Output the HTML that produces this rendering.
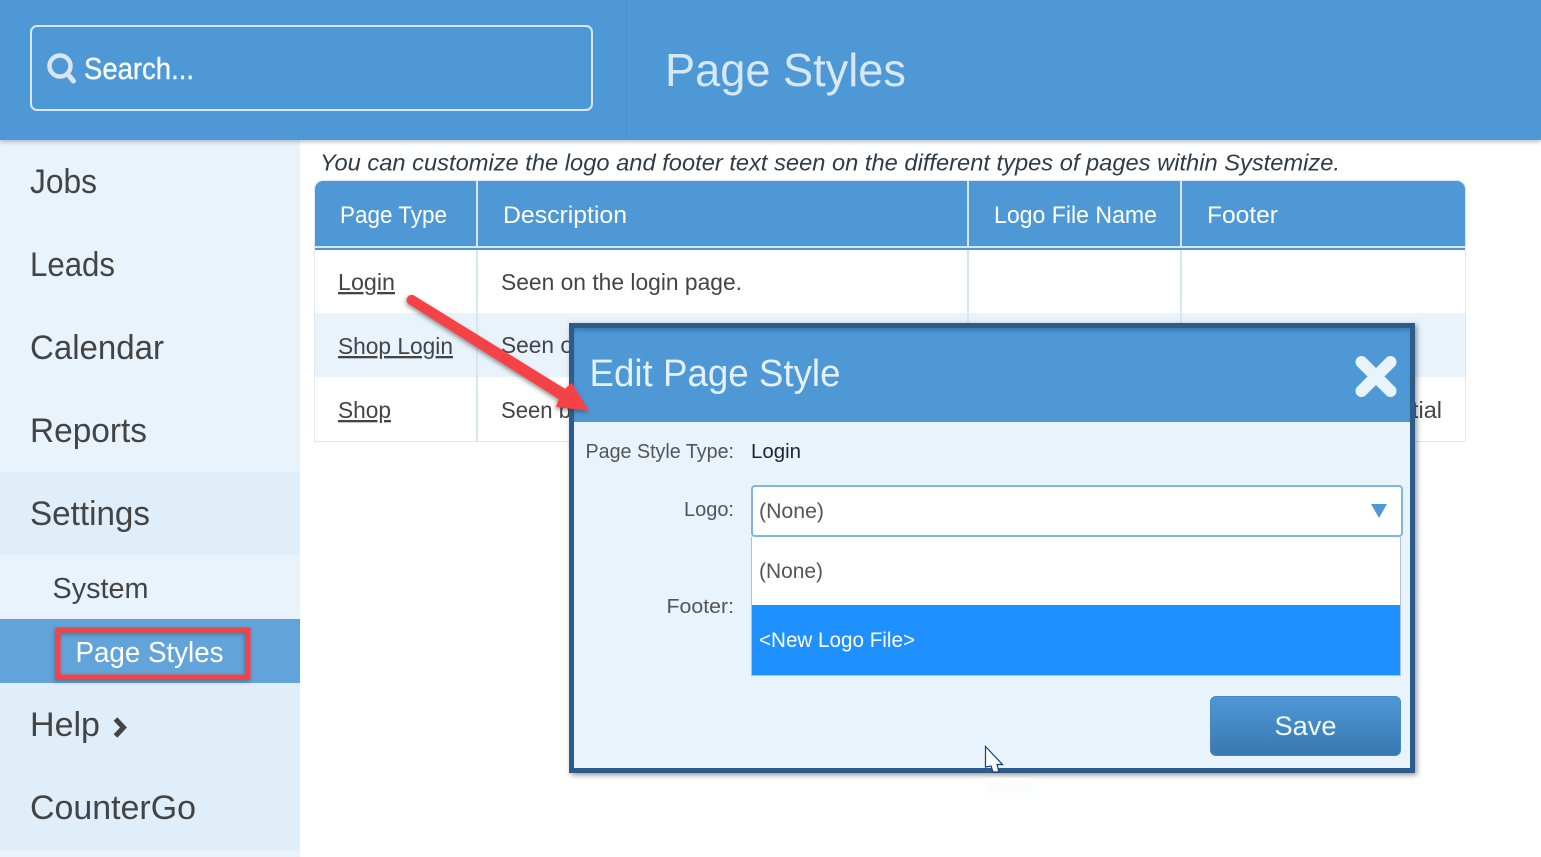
<!DOCTYPE html>
<html><head><meta charset="utf-8"><title>Page Styles</title>
<style>
html,body{margin:0;padding:0;width:1541px;height:857px;overflow:hidden;background:#fff}
div{position:absolute;box-sizing:border-box}
svg{position:absolute;left:0;top:0;overflow:visible}
text{font-family:"Liberation Sans",sans-serif;fill:#444;}
</style></head><body>
<!-- sidebar -->
<div style="left:0;top:140px;width:300px;height:717px;background:#e8f3fc"></div>
<div style="left:0;top:472px;width:300px;height:83px;background:#e0eefa"></div>
<div style="left:0;top:619px;width:300px;height:64px;background:#62a4da"></div>
<div style="left:0;top:683px;width:300px;height:167px;background:#e0eefa"></div>
<!-- header -->
<div style="left:0;top:0;width:1541px;height:140px;background:#4e98d6;box-shadow:0 2px 4px rgba(60,80,100,.35)"></div>
<div style="left:626px;top:0;width:1px;height:140px;background:#4a92cf"></div>
<div style="left:30px;top:25px;width:563px;height:86px;border:2px solid #d8e8f5;border-radius:7px"></div>
<!-- table -->
<div style="left:314px;top:180px;width:1152px;height:262px;border:1px solid #dde8f2;border-radius:8px 8px 0 0"></div>
<div style="left:315px;top:181px;width:1150px;height:65px;background:#4e98d6;border-radius:8px 8px 0 0"></div>
<div style="left:315px;top:246px;width:1150px;height:2px;background:#d8e6f3"></div>
<div style="left:315px;top:248px;width:1150px;height:2px;background:#4e98d6"></div>
<div style="left:315px;top:313px;width:1150px;height:64px;background:#e8f3fc"></div>
<div style="left:476px;top:181px;width:2px;height:260px;background:#d8e6f3"></div>
<div style="left:967px;top:181px;width:2px;height:260px;background:#d8e6f3"></div>
<div style="left:1180px;top:181px;width:2px;height:260px;background:#d8e6f3"></div>
<div style="left:476px;top:248px;width:2px;height:2px;background:#4e98d6"></div>
<div style="left:967px;top:248px;width:2px;height:2px;background:#4e98d6"></div>
<div style="left:1180px;top:248px;width:2px;height:2px;background:#4e98d6"></div>
<svg width="1541" height="857" viewBox="0 0 1541 857">
<defs><filter id="s" x="-20%" y="-20%" width="140%" height="140%"><feDropShadow dx="-1" dy="2" stdDeviation="2" flood-color="#334" flood-opacity=".45"/></filter></defs>
<circle cx="60" cy="66" r="10.500" fill="none" stroke="#d8e6f3" stroke-width="4.500"/>
<path d="M67.500 74l6 7" stroke="#d8e6f3" stroke-width="5" stroke-linecap="round"/>
<text x="84" y="79" font-size="31" textLength="110" lengthAdjust="spacingAndGlyphs" style="fill:#f6fafe;stroke:#f6fafe;stroke-width:.4">Search...</text>
<text x="665" y="86" font-size="46" textLength="241" lengthAdjust="spacingAndGlyphs" style="fill:#d6e8f7">Page Styles</text>
<text x="320" y="170.500" font-size="23" font-style="italic" textLength="1020" lengthAdjust="spacingAndGlyphs" style="fill:#2e3b4a">You can customize the logo and footer text seen on the different types of pages within Systemize.</text>
<g font-size="24">
<text x="340" y="223" textLength="107" lengthAdjust="spacingAndGlyphs" style="fill:#fff">Page Type</text>
<text x="503" y="223" textLength="124" lengthAdjust="spacingAndGlyphs" style="fill:#fff">Description</text>
<text x="994" y="223" textLength="163" lengthAdjust="spacingAndGlyphs" style="fill:#fff">Logo File Name</text>
<text x="1207" y="223" textLength="71" lengthAdjust="spacingAndGlyphs" style="fill:#fff">Footer</text>
</g>
<g font-size="23">
<text x="338" y="290" textLength="57" lengthAdjust="spacingAndGlyphs" text-decoration="underline">Login</text>
<text x="501" y="290" textLength="241" lengthAdjust="spacingAndGlyphs">Seen on the login page.</text>
<text x="338" y="354" textLength="115" lengthAdjust="spacingAndGlyphs" text-decoration="underline">Shop Login</text>
<text x="501" y="353" textLength="72" lengthAdjust="spacingAndGlyphs">Seen o</text>
<text x="338" y="418" textLength="53" lengthAdjust="spacingAndGlyphs" text-decoration="underline">Shop</text>
<text x="501" y="418" textLength="70" lengthAdjust="spacingAndGlyphs">Seen b</text>
<text x="1412" y="418" textLength="30" lengthAdjust="spacingAndGlyphs">tial</text>
</g>
<g font-size="34">
<text x="30" y="193" textLength="67" lengthAdjust="spacingAndGlyphs">Jobs</text>
<text x="30" y="276" textLength="85" lengthAdjust="spacingAndGlyphs">Leads</text>
<text x="30" y="359" textLength="134" lengthAdjust="spacingAndGlyphs">Calendar</text>
<text x="30" y="442" textLength="117" lengthAdjust="spacingAndGlyphs">Reports</text>
<text x="30" y="525" textLength="120" lengthAdjust="spacingAndGlyphs">Settings</text>
<text x="30" y="736" textLength="70" lengthAdjust="spacingAndGlyphs">Help</text>
<text x="30" y="819" textLength="166" lengthAdjust="spacingAndGlyphs">CounterGo</text>
</g>
<text x="52.500" y="598" font-size="29" textLength="96" lengthAdjust="spacingAndGlyphs">System</text>
<text x="75.500" y="662" font-size="29" textLength="148" lengthAdjust="spacingAndGlyphs" style="fill:#fff">Page Styles</text>
<path d="M115.500 719l8 8.500-8 8.500" fill="none" stroke="#444" stroke-width="5"/>
<rect x="58" y="630" width="190" height="47" fill="none" stroke="#f44246" stroke-width="5" filter="url(#s)"/>
</svg>
<!-- modal -->
<div style="left:569px;top:323px;width:846px;height:450px;border:5px solid #2e5c8a;background:#e8f3fc;box-shadow:2px 2px 5px rgba(40,50,60,.5)"></div>
<div style="left:574px;top:328px;width:836px;height:94px;background:#4e98d6;box-shadow:inset 0 4px 4px -2px rgba(40,80,120,.5)"></div>
<div style="left:751px;top:485px;width:652px;height:52px;background:#fff;border:2px solid #7fb6e6;border-radius:4px"></div>
<div style="left:751px;top:537px;width:650px;height:139px;background:#fff;border:1px solid #a9c3e0;border-top:none"></div>
<div style="left:752px;top:605px;width:648px;height:70px;background:#1e90ff"></div>
<div style="left:1210px;top:696px;width:191px;height:60px;border-radius:6px;background:linear-gradient(#4e98d6,#3a78b0);border:1px solid #4688c2"></div>
<div style="left:985px;top:778px;width:48px;height:15px;background:#fbfcfe"></div>
<svg width="1541" height="857" viewBox="0 0 1541 857">
<defs><filter id="a" x="-20%" y="-20%" width="140%" height="140%"><feDropShadow dx="-1" dy="2" stdDeviation="2" flood-color="#333" flood-opacity=".5"/></filter></defs>
<text x="589.500" y="386" font-size="38" textLength="251" lengthAdjust="spacingAndGlyphs" style="fill:#e4f0fa">Edit Page Style</text>
<path d="M1361.500 362l29 29M1390.500 362l-29 29" stroke="#e8f3fc" stroke-width="12" stroke-linecap="round"/>
<g font-size="20">
<text x="585.500" y="458" textLength="148.500" lengthAdjust="spacingAndGlyphs" style="fill:#555">Page Style Type:</text>
<text x="751" y="458" textLength="50" lengthAdjust="spacingAndGlyphs" style="fill:#1c2530">Login</text>
<text x="684" y="516" textLength="50" lengthAdjust="spacingAndGlyphs" style="fill:#555">Logo:</text>
<text x="666.500" y="613" textLength="67.500" lengthAdjust="spacingAndGlyphs" style="fill:#555">Footer:</text>
</g>
<text x="759" y="518" font-size="21" textLength="65" lengthAdjust="spacingAndGlyphs" style="fill:#555">(None)</text>
<text x="759" y="578" font-size="21" textLength="64" lengthAdjust="spacingAndGlyphs" style="fill:#555">(None)</text>
<text x="759" y="647" font-size="21" textLength="156" lengthAdjust="spacingAndGlyphs" style="fill:#fff">&lt;New Logo File&gt;</text>
<path d="M1371 504h16l-8 14z" fill="#4e98d6"/>
<text x="1274.500" y="735" font-size="27" textLength="62" lengthAdjust="spacingAndGlyphs" style="fill:#f2f8fd">Save</text>
<path d="M414.400 295.700L565.200 388.900 571.700 382.700 589 410.700 556 407 558.800 399.100 409 304.300A5 5 0 0 1 414.400 295.700Z" fill="#f44246" filter="url(#a)"/>
<path d="M985.500 746.500L1002.500 764.500H997L999 772H993L991 766L985.500 767Z" fill="#fff" stroke="#123f7a" stroke-width="1.200"/>
</svg>
</body></html>
